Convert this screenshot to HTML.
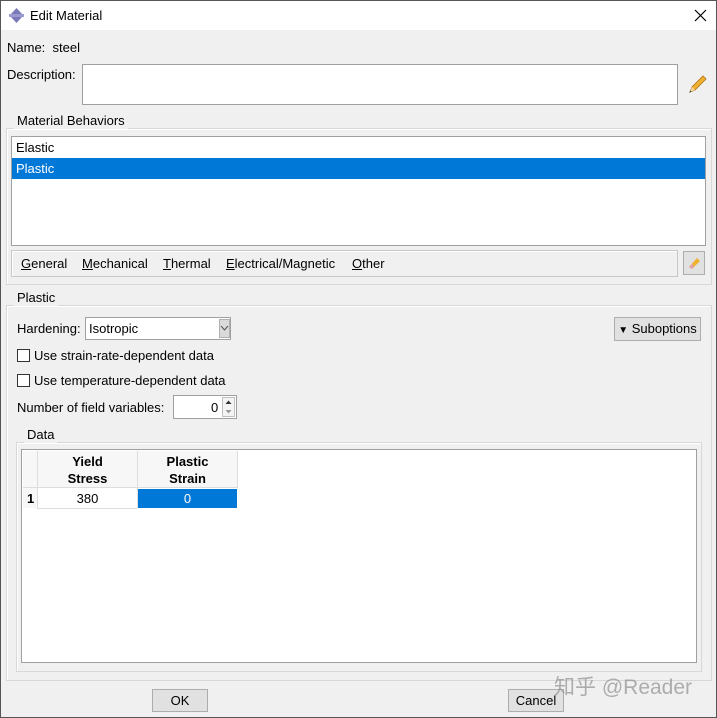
<!DOCTYPE html>
<html><head><meta charset="utf-8"><style>
*{box-sizing:border-box;margin:0;padding:0}
body{width:717px;height:718px;background:#f0f0f0;font-family:"Liberation Sans","Noto Sans CJK SC",sans-serif;font-size:13px;color:#000;position:relative;overflow:hidden}
.a{position:absolute}
.t{position:absolute;line-height:16px;white-space:nowrap}
.grp{position:absolute;border:1px solid #d8d8d8;box-shadow:inset 1px 1px 0 #fff}
.lbl{position:absolute;background:#f0f0f0;padding:0 3px;line-height:16px}
.btn{position:absolute;background:#e1e1e1;border:1px solid #adadad;text-align:center;line-height:21px}
.cb{position:absolute;width:13px;height:13px;border:1px solid #333;background:#fff}
u{text-decoration:underline}
</style></head><body>
<div class="a" style="left:0;top:0;width:717px;height:718px;border:1px solid #555"></div>
<div class="a" style="left:1px;top:1px;width:715px;height:29px;background:#fff"></div>
<svg class="a" style="left:8px;top:7px" width="17" height="17" viewBox="0 0 17 17"><path d="M8.5 1L14 7H3z" fill="#7a7ab8"/><path d="M8.5 16L14 10H3z" fill="#7a7ab8"/><rect x="1" y="7" width="15" height="3" fill="#9a9ad0"/></svg>
<div class="t" style="left:30px;top:8px">Edit Material</div>
<svg class="a" style="left:694px;top:9px" width="13" height="13"><path d="M1 1L12 12M12 1L1 12" stroke="#000" stroke-width="1.2"/></svg>
<div class="t" style="left:7px;top:40px">Name:&nbsp; steel</div>
<div class="t" style="left:7px;top:67px">Description:</div>
<div class="a" style="left:82px;top:64px;width:596px;height:41px;background:#fff;border:1px solid #a0a0a0"></div>
<svg class="a" style="left:686px;top:74px" width="22" height="22" viewBox="0 0 22 22"><path d="M4 18L6 13L17 2L20 5L9 16Z" fill="#f0b030" stroke="#b07010" stroke-width="0.8"/><path d="M4 18L6 13L9 16Z" fill="#f4d8a0"/><path d="M3 19L4.5 16.5L5.5 17.5Z" fill="#333"/></svg>
<div class="grp" style="left:6px;top:128px;width:706px;height:157px"></div>
<div class="lbl" style="left:14px;top:113px">Material Behaviors</div>
<div class="a" style="left:11px;top:136px;width:695px;height:110px;background:#fff;border:1px solid #a0a0a0"></div>
<div class="t" style="left:16px;top:140px">Elastic</div>
<div class="a" style="left:12px;top:158px;width:693px;height:21px;background:#0078d7"></div>
<div class="t" style="left:16px;top:161px;color:#fff">Plastic</div>
<div class="a" style="left:11px;top:250px;width:667px;height:27px;border:1px solid #c8c8c8;box-shadow:inset 1px 1px 0 #fff"></div>
<div class="t" style="left:21px;top:256px"><u>G</u>eneral</div>
<div class="t" style="left:82px;top:256px"><u>M</u>echanical</div>
<div class="t" style="left:163px;top:256px"><u>T</u>hermal</div>
<div class="t" style="left:226px;top:256px"><u>E</u>lectrical/Magnetic</div>
<div class="t" style="left:352px;top:256px"><u>O</u>ther</div>
<div class="a" style="left:683px;top:251px;width:22px;height:24px;background:#e1e1e1;border:1px solid #adadad"></div>
<svg class="a" style="left:686px;top:255px" width="16" height="16"><path d="M3 12L11 3L14 6L6 14Z" fill="#f0b030"/><path d="M3 12L6 9L8 11L6 14Z" fill="#e0a0b0"/></svg>
<div class="grp" style="left:6px;top:305px;width:706px;height:376px"></div>
<div class="lbl" style="left:14px;top:290px">Plastic</div>
<div class="t" style="left:17px;top:321px">Hardening:</div>
<div class="a" style="left:85px;top:317px;width:146px;height:23px;background:#fff;border:1px solid #a0a0a0"></div>
<div class="t" style="left:89px;top:321px">Isotropic</div>
<div class="a" style="left:219px;top:319px;width:11px;height:19px;background:#dadada;border:1px solid #b0b0b0"></div>
<svg class="a" style="left:220px;top:325px" width="9" height="6"><path d="M1 1L4.5 5L8 1" stroke="#555" fill="none"/></svg>
<div class="btn" style="left:614px;top:317px;width:87px;height:24px"><span style="font-size:10px">▼</span> Suboptions</div>
<div class="cb" style="left:17px;top:349px"></div>
<div class="t" style="left:34px;top:348px">Use strain-rate-dependent data</div>
<div class="cb" style="left:17px;top:374px"></div>
<div class="t" style="left:34px;top:373px">Use temperature-dependent data</div>
<div class="t" style="left:17px;top:400px">Number of field variables:</div>
<div class="a" style="left:173px;top:395px;width:64px;height:24px;background:#fff;border:1px solid #a0a0a0"></div>
<div class="t" style="left:211px;top:400px">0</div>
<div class="a" style="left:222px;top:397px;width:13px;height:20px;border:1px solid #c0c0c0;background:#f4f4f4"></div>
<svg class="a" style="left:224px;top:399px" width="9" height="16"><path d="M1.5 5L4.5 1.5L7.5 5Z" fill="#333"/><path d="M1.5 11L4.5 14.5L7.5 11Z" fill="#999"/></svg>
<div class="grp" style="left:16px;top:442px;width:686px;height:230px"></div>
<div class="lbl" style="left:24px;top:427px">Data</div>
<div class="a" style="left:21px;top:449px;width:676px;height:214px;background:#fff;border:1px solid #a0a0a0"></div>
<div class="a" style="left:23px;top:451px;width:214px;height:37px;background:#f7f7f7;border-bottom:1px solid #ddd"></div>
<div class="a" style="left:23px;top:488px;width:14px;height:20px;background:#f7f7f7"></div>
<div class="a" style="left:37px;top:451px;width:1px;height:57px;background:#ddd"></div>
<div class="a" style="left:137px;top:451px;width:1px;height:57px;background:#ddd"></div>
<div class="a" style="left:237px;top:451px;width:1px;height:37px;background:#ddd"></div>
<div class="a" style="left:37px;top:508px;width:100px;height:1px;background:#ddd"></div>
<div class="t" style="left:38px;top:453px;width:99px;text-align:center;font-weight:bold;line-height:17px">Yield<br>Stress</div>
<div class="t" style="left:138px;top:453px;width:99px;text-align:center;font-weight:bold;line-height:17px">Plastic<br>Strain</div>
<div class="t" style="left:27px;top:491px;font-weight:bold">1</div>
<div class="t" style="left:38px;top:491px;width:99px;text-align:center">380</div>
<div class="a" style="left:138px;top:489px;width:99px;height:19px;background:#0078d7"></div>
<div class="t" style="left:138px;top:491px;width:99px;text-align:center;color:#fff">0</div>
<div class="btn" style="left:152px;top:689px;width:56px;height:23px">OK</div>
<div class="btn" style="left:508px;top:689px;width:56px;height:23px">Cancel</div>
<div class="t" style="left:554px;top:675px;font-size:21px;line-height:26px;color:rgba(150,150,150,0.75)">知乎 @Reader</div>
</body></html>
